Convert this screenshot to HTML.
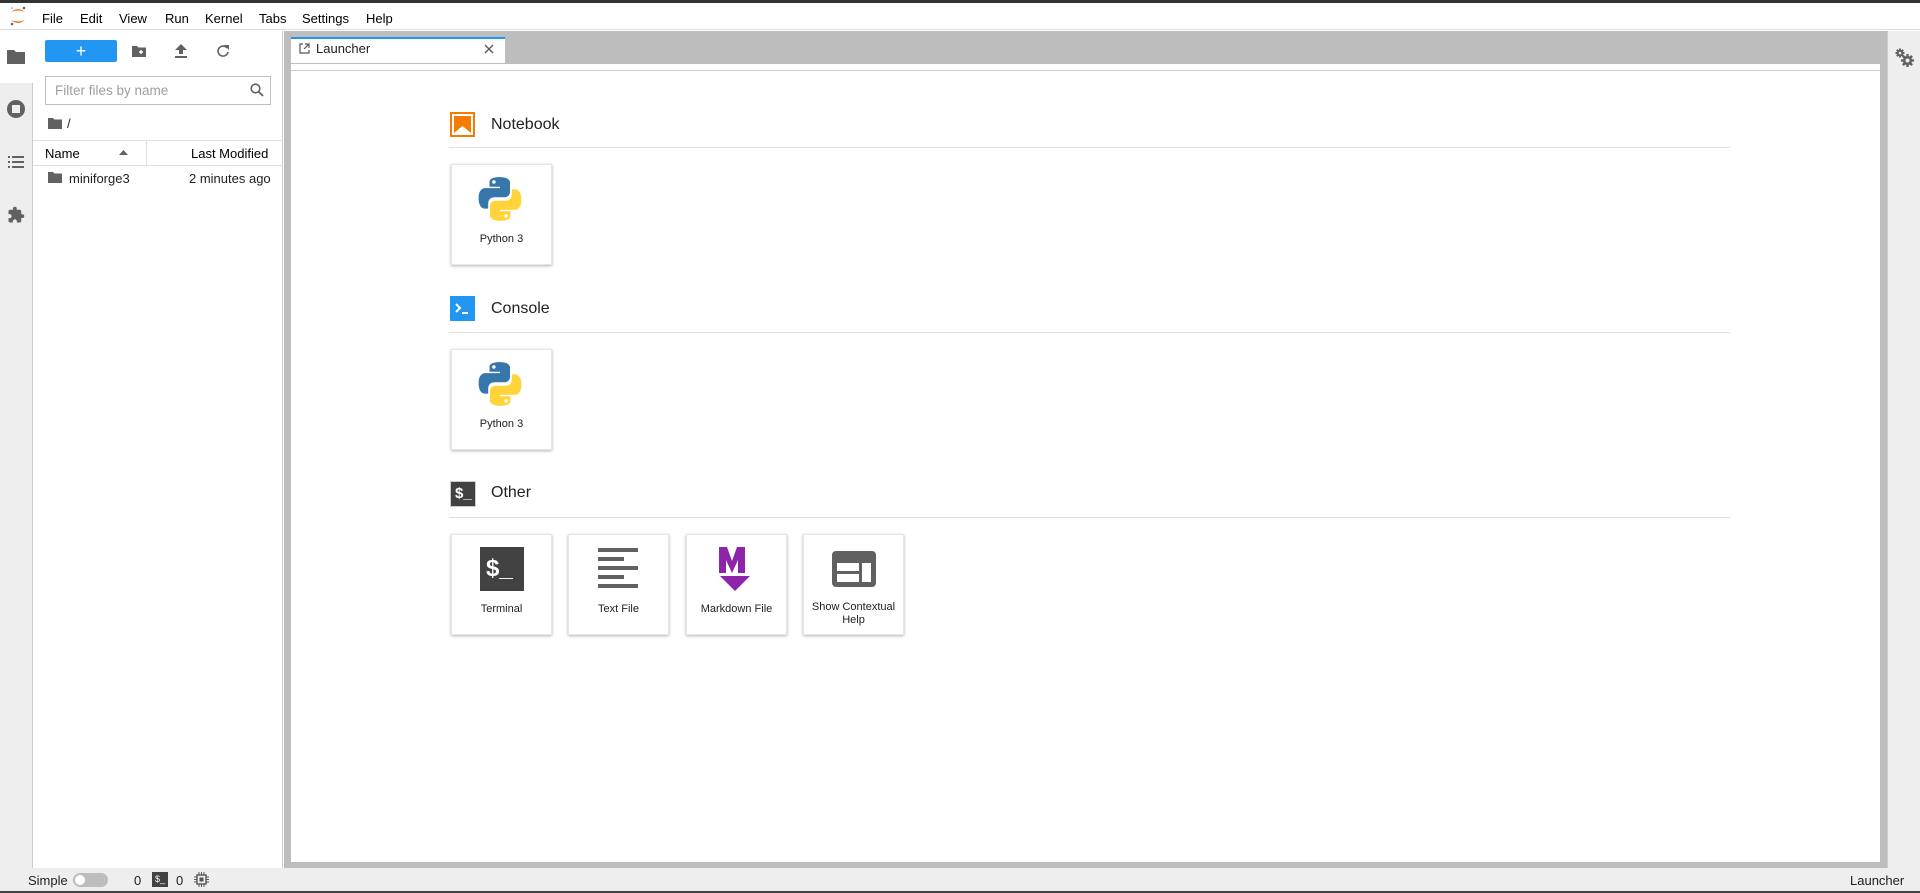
<!DOCTYPE html>
<html><head><meta charset="utf-8"><style>
*{box-sizing:border-box;margin:0;padding:0}
body{width:1920px;height:893px;overflow:hidden;background:#fff;font-family:"Liberation Sans",sans-serif;font-size:13px;color:#212121;position:relative}
.a{position:absolute}
.menu span{position:absolute;top:11px;font-size:13px;color:#000}
.card{position:absolute;width:101px;height:101px;background:#fff;box-shadow:0 1px 3px rgba(0,0,0,.3);border:1px solid #e6e6e6}
.card .lbl{position:absolute;left:0;right:0;top:68px;text-align:center;font-size:11px;color:#222;line-height:13px}
.hdr{position:absolute;font-size:16px;color:#222}
.hl{position:absolute;left:449px;width:1281px;height:1px;background:#e0e0e0}
</style></head><body>
<div class="a" style="left:0;top:0;width:1920px;height:3px;background:#333"></div>
<div class="a" style="left:0;top:3px;width:1920px;height:27px;background:#fff;border-bottom:1px solid #ddd"></div>
<svg class="a" style="left:8px;top:5px" width="20" height="22" viewBox="0 0 20 22"><path d="M3 7 Q10 1 17 7 Q10 4 3 7Z" fill="#f37726"/><path d="M3 15 Q10 21 17 15 Q10 18 3 15Z" fill="#f37726"/><circle cx="16" cy="3" r="1.3" fill="#666"/><circle cx="4" cy="19" r="1.3" fill="#666"/><circle cx="4" cy="3" r="0.8" fill="#888"/></svg>
<div class="menu"><span style="left:42px">File</span><span style="left:80px">Edit</span><span style="left:119px">View</span><span style="left:165px">Run</span><span style="left:205px">Kernel</span><span style="left:259px">Tabs</span><span style="left:302px">Settings</span><span style="left:366px">Help</span></div>
<div class="a" style="left:0;top:31px;width:33px;height:837px;background:#eee;border-right:1px solid #ccc"></div>
<div class="a" style="left:0;top:31px;width:34px;height:52px;background:#fff"></div>
<svg class="a" style="left:7px;top:49px" width="18" height="15" viewBox="0 0 18 15"><path d="M0 1h7l2 2h9v12H0z" fill="#616161"/></svg>
<svg class="a" style="left:6px;top:99px" width="20" height="20"><circle cx="10" cy="10" r="9" fill="#616161"/><rect x="6" y="6" width="8" height="8" fill="#eee"/></svg>
<svg class="a" style="left:8px;top:155px" width="16" height="14"><g fill="#616161"><rect x="0" y="1" width="2" height="2"/><rect x="4" y="1" width="12" height="2"/><rect x="0" y="6" width="2" height="2"/><rect x="4" y="6" width="12" height="2"/><rect x="0" y="11" width="2" height="2"/><rect x="4" y="11" width="12" height="2"/></g></svg>
<svg class="a" style="left:7px;top:206px" width="18" height="18" viewBox="0 0 24 24"><path d="M20.5 11H19V7c0-1.1-.9-2-2-2h-4V3.5a2.5 2.5 0 0 0-5 0V5H4c-1.1 0-2 .9-2 2v3.800h1.5c1.5 0 2.7 1.2 2.7 2.7S5 16.2 3.5 16.2H2V20c0 1.1.9 2 2 2h3.8v-1.5c0-1.5 1.2-2.7 2.7-2.7s2.7 1.2 2.7 2.7V22H17c1.1 0 2-.9 2-2v-4h1.5a2.5 2.5 0 0 0 0-5z" fill="#616161"/></svg>
<div class="a" style="left:33px;top:31px;width:250px;height:837px;background:#fff;border-right:1px solid #ccc"></div>
<div class="a" style="left:45px;top:40px;width:72px;height:22px;background:#2196f3;border-radius:2px;color:#fff;text-align:center;font-size:18px;line-height:22px">+</div>
<svg class="a" style="left:132px;top:45px" width="14" height="12" viewBox="0 0 14 12"><path d="M0 1h5l1.5 1.5H14V12H0z" fill="#616161"/><path d="M9 5v4M7 7h4" stroke="#fff" stroke-width="1.4"/></svg>
<svg class="a" style="left:175px;top:44px" width="12" height="14"><path d="M6 0L12 6H8v4H4V6H0z M0 12h12v2H0z" fill="#616161"/></svg>
<svg class="a" style="left:216px;top:44px" width="14" height="14" viewBox="0 0 14 14"><path d="M11 4A5 5 0 1 0 12 8" fill="none" stroke="#616161" stroke-width="1.6"/><path d="M8 1h5v5z" fill="#616161"/></svg>
<div class="a" style="left:45px;top:76px;width:226px;height:29px;border:1px solid #bdbdbd"></div>
<div class="a" style="left:55px;top:83px;color:#9e9e9e;font-size:13.5px">Filter files by name</div>
<svg class="a" style="left:250px;top:83px" width="14" height="14"><circle cx="5.5" cy="5.5" r="4.3" fill="none" stroke="#616161" stroke-width="1.6"/><path d="M9 9l4 4" stroke="#616161" stroke-width="1.8"/></svg>
<svg class="a" style="left:48px;top:118px" width="14" height="11"><path d="M0 0h5l1.5 1.5H14V11H0z" fill="#616161"/></svg>
<div class="a" style="left:67px;top:116px">/</div>
<div class="a" style="left:33px;top:140px;width:250px;height:26px;border-top:1px solid #e0e0e0;border-bottom:1px solid #e0e0e0"></div>
<div class="a" style="left:146px;top:140px;width:1px;height:26px;background:#e0e0e0"></div>
<div class="a" style="left:45px;top:146px;color:#000">Name</div>
<svg class="a" style="left:119px;top:150px" width="9" height="5"><path d="M0 5L4.5 0 9 5z" fill="#616161"/></svg>
<div class="a" style="left:191px;top:146px;color:#000">Last Modified</div>
<svg class="a" style="left:48px;top:172px" width="14" height="11"><path d="M0 0h5l1.5 1.5H14V11H0z" fill="#616161"/></svg>
<div class="a" style="left:69px;top:171px">miniforge3</div>
<div class="a" style="left:189px;top:171px">2 minutes ago</div>
<div class="a" style="left:284px;top:31px;width:1603px;height:837px;background:#bdbdbd"></div>
<div class="a" style="left:291px;top:37px;width:214px;height:26px;background:#fff;border-top:2px solid #2196f3"></div>
<svg class="a" style="left:299px;top:43px" width="11" height="11"><path d="M4 1H1v9h9V7" fill="none" stroke="#555" stroke-width="1.2"/><path d="M6 1h4v4M10 1L5 6" fill="none" stroke="#555" stroke-width="1.2"/></svg>
<div class="a" style="left:316px;top:41px;font-size:13px">Launcher</div>
<svg class="a" style="left:484px;top:44px" width="10" height="10"><path d="M1 1l8 8M9 1l-8 8" stroke="#555" stroke-width="1.3"/></svg>
<div class="a" style="left:291px;top:63px;width:1589px;height:799px;background:#fff;border-top:1px solid #bdbdbd;"></div>
<div class="a" style="left:291px;top:70px;width:1589px;height:1px;background:#ccc"></div>
<div class="a" style="left:450px;top:112px;width:25px;height:25px;border:2px solid #f57c00;background:#fff"></div>
<svg class="a" style="left:454px;top:116px" width="17" height="17"><path d="M0 0h17v17l-8.5-7L0 17z" fill="#f57c00"/></svg>
<div class="hdr" style="left:491px;top:116px">Notebook</div>
<div class="hl" style="top:147px"></div>
<div class="a" style="left:450px;top:296px;width:25px;height:25px;background:#2196f3"></div>
<svg class="a" style="left:450px;top:296px" width="25" height="25"><path d="M6 8l4 4-4 4" fill="none" stroke="#fff" stroke-width="2"/><path d="M12 17h6" stroke="#fff" stroke-width="2"/></svg>
<div class="hdr" style="left:491px;top:300px">Console</div>
<div class="hl" style="top:332px"></div>
<div class="a" style="left:450px;top:481px;width:26px;height:26px;background:#424242;border:1px solid #ccc;color:#fff;font-weight:bold;font-size:15px;line-height:24px;padding-left:4px">$_</div>
<div class="hdr" style="left:491px;top:484px">Other</div>
<div class="hl" style="top:517px"></div>
<div class="card" style="left:451px;top:164px"><svg class="a" style="left:24px;top:10px" width="48" height="48" viewBox="0 0 110 110"><path d="M54 5c-25 0-23 11-23 11v11h24v3H22S6 28 6 53s14 24 14 24h8V65s0-14 14-14h23s13 0 13-13V18S80 5 54 5zM41 12a4 4 0 1 1 0 8 4 4 0 0 1 0-8z" fill="#3776ab"/><path d="M56 105c25 0 23-11 23-11V83H55v-3h33s16 2 16-23-14-24-14-24h-8v12s0 14-14 14H45s-13 0-13 13v20s-2 13 24 13zm13-7a4 4 0 1 1 0-8 4 4 0 0 1 0 8z" fill="#ffd43b"/></svg><div class="lbl">Python 3</div></div>
<div class="card" style="left:451px;top:349px"><svg class="a" style="left:24px;top:10px" width="48" height="48" viewBox="0 0 110 110"><path d="M54 5c-25 0-23 11-23 11v11h24v3H22S6 28 6 53s14 24 14 24h8V65s0-14 14-14h23s13 0 13-13V18S80 5 54 5zM41 12a4 4 0 1 1 0 8 4 4 0 0 1 0-8z" fill="#3776ab"/><path d="M56 105c25 0 23-11 23-11V83H55v-3h33s16 2 16-23-14-24-14-24h-8v12s0 14-14 14H45s-13 0-13 13v20s-2 13 24 13zm13-7a4 4 0 1 1 0-8 4 4 0 0 1 0 8z" fill="#ffd43b"/></svg><div class="lbl">Python 3</div></div>
<div class="card" style="left:451px;top:534px"><div class="a" style="left:28px;top:12px;width:44px;height:44px;background:#424242;color:#fff;font-weight:bold;font-size:24px;line-height:44px;padding-left:6px">$_</div><div class="lbl">Terminal</div></div>
<div class="card" style="left:568px;top:534px"><svg class="a" style="left:29px;top:13px" width="41" height="41"><g fill="#616161"><rect x="0" y="0" width="40" height="4"/><rect x="0" y="9" width="26" height="4"/><rect x="0" y="18" width="40" height="4"/><rect x="0" y="27" width="26" height="4"/><rect x="0" y="36" width="40" height="4"/></g></svg><div class="lbl">Text File</div></div>
<div class="card" style="left:686px;top:534px"><svg class="a" style="left:30px;top:10px" width="40" height="48"><path d="M2 0h8l5 14 5-14h8v26h-7V13l-6 13-6-13v13H2z" fill="#8e24aa" transform="translate(0,2)"/><path d="M3 31h30L18 46z" fill="#8e24aa"/></svg><div class="lbl">Markdown File</div></div>
<div class="card" style="left:803px;top:534px"><svg class="a" style="left:28px;top:16px" width="45" height="36"><rect x="0" y="0" width="44" height="36" rx="4" fill="#616161"/><rect x="5" y="12" width="22" height="8" fill="#fff"/><rect x="5" y="23" width="22" height="8" fill="#fff"/><rect x="30" y="12" width="9" height="19" fill="#fff"/></svg><div class="lbl" style="top:66px">Show Contextual<br>Help</div></div>
<div class="a" style="left:1887px;top:31px;width:33px;height:837px;background:#eee;border-left:1px solid #ccc"></div>
<svg class="a" style="left:1895px;top:48px" width="20" height="20" viewBox="0 0 20 20">
<g fill="#616161"><circle cx="5" cy="5" r="3.4"/><rect x="4" y="0.5" width="2" height="9"/><rect x="0.5" y="4" width="9" height="2"/><rect x="4" y="0.5" width="2" height="9" transform="rotate(45 5 5)"/><rect x="4" y="0.5" width="2" height="9" transform="rotate(-45 5 5)"/>
<circle cx="12.5" cy="12.5" r="4.6"/><rect x="11.3" y="6" width="2.4" height="13"/><rect x="6" y="11.3" width="13" height="2.4"/><rect x="11.3" y="6" width="2.4" height="13" transform="rotate(45 12.5 12.5)"/><rect x="11.3" y="6" width="2.4" height="13" transform="rotate(-45 12.5 12.5)"/></g>
<circle cx="5" cy="5" r="1.3" fill="#eee"/><circle cx="12.5" cy="12.5" r="2" fill="#eee"/></svg>
<div class="a" style="left:0;top:868px;width:1920px;height:23px;background:#eee"></div>
<div class="a" style="left:0;top:891px;width:1920px;height:2px;background:#444"></div>
<div class="a" style="left:28px;top:873px;font-size:13px">Simple</div>
<div class="a" style="left:73px;top:873px;width:35px;height:14px;border-radius:7px;background:#bdbdbd"></div>
<div class="a" style="left:75px;top:875px;width:10px;height:10px;border-radius:5px;background:#fff"></div>
<div class="a" style="left:134px;top:873px">0</div>
<div class="a" style="left:152px;top:872px;width:16px;height:15px;background:#424242;color:#fff;font-size:9px;line-height:15px;text-align:center">$_</div>
<div class="a" style="left:176px;top:873px">0</div>
<svg class="a" style="left:194px;top:872px" width="15" height="15" viewBox="0 0 15 15"><rect x="3" y="3" width="9" height="9" fill="none" stroke="#555" stroke-width="1.4"/><rect x="5.5" y="5.5" width="4" height="4" fill="#555"/><path d="M5 0v3M7.5 0v3M10 0v3M5 12v3M7.5 12v3M10 12v3M0 5h3M0 7.5h3M0 10h3M12 5h3M12 7.5h3M12 10h3" stroke="#555"/></svg>
<div class="a" style="left:1850px;top:873px">Launcher</div>
</body></html>
